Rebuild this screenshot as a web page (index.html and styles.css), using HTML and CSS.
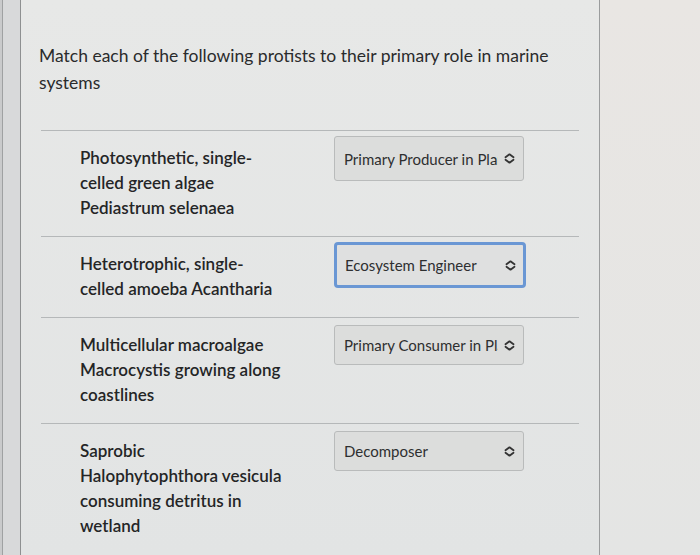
FILE: index.html
```html
<!DOCTYPE html>
<html>
<head>
<meta charset="utf-8">
<link rel="stylesheet" href="styles.css">
</head>
<body>
<div class="screen">
  <div class="edge"></div>
  <div class="card">
    <p class="prompt">Match each of the following protists to their primary role in marine systems</p>
    <div class="list">
      <div class="row">
        <div class="item">Photosynthetic, single-<br>celled green algae<br>Pediastrum selenaea</div>
        <div class="select tall"><span class="val">Primary Producer in Plankton</span><svg class="chev" viewBox="0 0 11 11" width="11" height="11"><path d="M1.5 4.3 L5.5 1.3 L9.5 4.3 M1.5 6.7 L5.5 9.7 L9.5 6.7" fill="none" stroke="#333" stroke-width="1.8" stroke-linecap="round" stroke-linejoin="round"/></svg></div>
      </div>
      <div class="row">
        <div class="item">Heterotrophic, single-<br>celled amoeba Acantharia</div>
        <div class="select focus"><span class="val">Ecosystem Engineer</span><svg class="chev" viewBox="0 0 11 11" width="11" height="11"><path d="M1.5 4.3 L5.5 1.3 L9.5 4.3 M1.5 6.7 L5.5 9.7 L9.5 6.7" fill="none" stroke="#333" stroke-width="1.8" stroke-linecap="round" stroke-linejoin="round"/></svg></div>
      </div>
      <div class="row">
        <div class="item">Multicellular macroalgae<br>Macrocystis growing along<br>coastlines</div>
        <div class="select low"><span class="val">Primary Consumer in Plankton</span><svg class="chev" viewBox="0 0 11 11" width="11" height="11"><path d="M1.5 4.3 L5.5 1.3 L9.5 4.3 M1.5 6.7 L5.5 9.7 L9.5 6.7" fill="none" stroke="#333" stroke-width="1.8" stroke-linecap="round" stroke-linejoin="round"/></svg></div>
      </div>
      <div class="row">
        <div class="item">Saprobic<br>Halophytophthora vesicula<br>consuming detritus in<br>wetland</div>
        <div class="select low"><span class="val">Decomposer</span><svg class="chev" viewBox="0 0 11 11" width="11" height="11"><path d="M1.5 4.3 L5.5 1.3 L9.5 4.3 M1.5 6.7 L5.5 9.7 L9.5 6.7" fill="none" stroke="#333" stroke-width="1.8" stroke-linecap="round" stroke-linejoin="round"/></svg></div>
      </div>
    </div>
  </div>
  <div class="outside"></div>
</div>
</body>
</html>
```
FILE: styles.css
```css
html, body {
  margin: 0;
  padding: 0;
  width: 700px;
  height: 555px;
  overflow: hidden;
  background: #e5e4e2;
  font-family: Lato, "Open Sans", sans-serif;
  color: #262728;
}
.screen {
  display: flex;
  height: 555px;
}
.edge {
  width: 20px;
  flex: none;
  background: linear-gradient(to right, #c9cacb 0, #c9cacb 2px, #9fa1a2 2px, #9fa1a2 3px, #d8d9da 3px);
}
.card {
  width: 580px;
  flex: none;
  background: linear-gradient(to bottom, #e7e8e7, #e2e4e4);
  border-left: 1px solid #8e9091;
  border-right: 1px solid #9a9c9d;
  box-sizing: border-box;
  padding: 42px 0 0 18px;
}
.outside {
  flex: 1;
  background: linear-gradient(to bottom, #e9e6e3, #e4e5e4);
}
.prompt {
  margin: 0;
  font-size: 17.5px;
  line-height: 27px;
  width: 545px;
  color: #2a2b2c;
}
.list {
  margin: 34px 20px 0 2px;
}
.row {
  border-top: 1px solid #b5b8b9;
  display: flex;
  align-items: flex-start;
  padding: 5px 0 16px 39px;
}
.item {
  width: 210px;
  margin-top: 9px;
  margin-right: 44px;
  font-size: 17px;
  font-weight: 600;
  line-height: 25px;
  color: #242526;
}
.select {
  width: 190px;
  height: 40px;
  box-sizing: border-box;
  background: #dcdddc;
  border: 1px solid #b9bbbb;
  border-radius: 3px;
  display: flex;
  align-items: center;
  padding: 0 8px 0 9px;
}
.select.tall { height: 45px; }
.select.low { margin-top: 2px; }
.select .val {
  flex: 1;
  white-space: nowrap;
  overflow: hidden;
  font-size: 15px;
  color: #2e2f30;
  margin-right: 6px;
}
.select .chev { flex: none; }
.select.focus {
  border: 3px solid #6a97d4;
  border-radius: 4px;
  background: #dfe0e0;
  padding-left: 8px;
  padding-right: 7px;
  height: 46px;
  width: 192px;
}
```
